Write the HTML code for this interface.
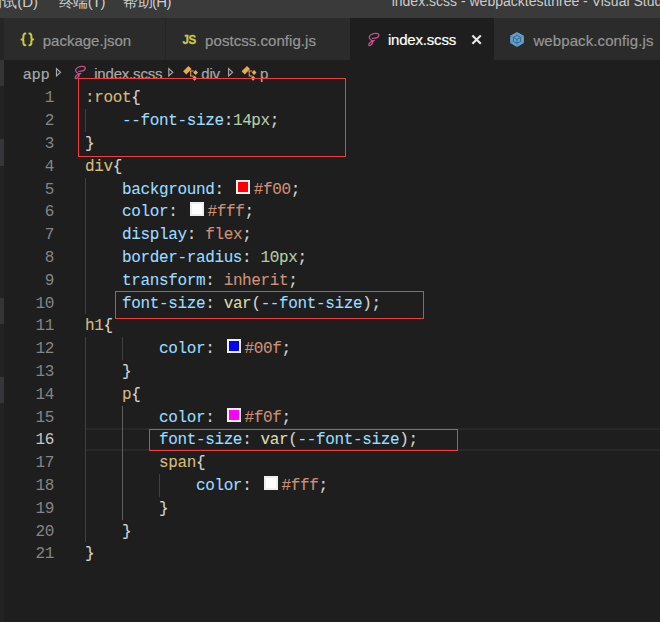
<!DOCTYPE html>
<html><head><meta charset="utf-8">
<style>
*{margin:0;padding:0;box-sizing:border-box}
html,body{width:660px;height:622px;overflow:hidden;background:#1e1e1e}
body{position:relative;font-family:"Liberation Sans",sans-serif}
.abs{position:absolute}
#title{left:0;top:0;width:660px;height:18px;background:#3a3a3a;overflow:hidden}
#title span{position:absolute;color:#cccccc;font-size:14px;white-space:nowrap}
#tabs{left:0;top:18px;width:660px;height:42px;background:#252526}
.tab{position:absolute;top:0;height:42px;background:#2b2b2b}
.lbl{-webkit-text-stroke:0.2px currentColor;position:absolute;top:11px;font-size:15px;color:#969696;white-space:nowrap;line-height:20px}
.tab.active{background:#1e1e1e;height:42px}
#crumb{left:0;top:60px;width:660px;height:26px}
#crumb span{-webkit-text-stroke:0.2px currentColor;position:absolute;top:3px;font-size:15px;color:#a9a9a9;white-space:nowrap;line-height:20px}
#strip{left:0;top:60px;width:4px;height:562px;background:#232323}
.seg{position:absolute;left:0;width:4px}
.ln{position:absolute;right:606px;font-family:"Liberation Mono",monospace;font-size:16px;letter-spacing:-0.36px;color:#858585;line-height:22.8px;height:22.8px;white-space:pre;text-align:right}
.code{-webkit-text-stroke:0.1px currentColor;position:absolute;left:85px;font-family:"Liberation Mono",monospace;font-size:16px;letter-spacing:-0.36px;color:#d4d4d4;line-height:22.8px;height:22.8px;white-space:pre}
.g{position:absolute;width:1px;background:#404040}
.box{position:absolute;border:1px solid #f03e3e}
.ln.cur{color:#c6c6c6}
.sel{color:#d7ba7d}.prop{color:#9cdcfe}.str{color:#ce9178}.num{color:#b5cea8}.fn{color:#dcdcaa}
.sw{display:inline-block;width:14px;height:14px;border:2px solid #eeeeee;margin:0 3.3px 0 3.6px;vertical-align:0px}
</style></head><body>
<div id="title" class="abs">
  <span style="right:622px;top:-7px;font-size:15px">调试(D)</span>
  <span style="right:555px;top:-7px;font-size:15px;letter-spacing:-0.6px">终端(T)</span>
  <span style="right:489px;top:-7px;font-size:15px;letter-spacing:-0.6px">帮助(H)</span>
  <span style="left:391.7px;top:-7px;font-size:14px">index.scss - webpacktestthree - Visual Studio Code</span>
</div>
<div id="tabs" class="abs">
  <div class="tab" style="left:4px;width:161px"></div>
  <div class="tab" style="left:166px;width:184px"></div>
  <div class="tab active" style="left:350px;width:144px"></div>
  <div class="tab" style="left:494px;width:166px"></div>
  <span class="lbl" style="left:42.7px;top:12.8px;letter-spacing:0.01px">package.json</span>
  <span class="lbl" style="left:205.1px;top:12.8px;letter-spacing:0.05px">postcss.config.js</span>
  <span class="lbl" style="left:387.9px;top:12.4px;letter-spacing:-0.19px;color:#ffffff">index.scss</span>
  <span class="lbl" style="left:533.4px;top:12.8px;letter-spacing:0.1px">webpack.config.js</span>
  <svg class="abs" style="left:0;top:0" width="660" height="42" viewBox="0 18 660 42">
    <g fill="none" stroke="#c8ca3e" stroke-width="2" stroke-linecap="round" stroke-linejoin="round">
      <path d="M25.4 33.6 C23.6 33.8 23.4 35 23.4 36.6 L23.4 37.8 C23.4 38.9 22.8 39.4 21.6 39.4 C22.8 39.4 23.4 39.9 23.4 41 L23.4 42.4 C23.4 44 23.6 45.2 25.4 45.3"/>
      <path d="M29.4 33.6 C31.2 33.8 31.4 35 31.4 36.6 L31.4 37.8 C31.4 38.9 32 39.4 33.2 39.4 C32 39.4 31.4 39.9 31.4 41 L31.4 42.4 C31.4 44 31.2 45.2 29.4 45.3"/>
    </g>
    <text x="182.6" y="44" font-family="Liberation Sans" font-weight="bold" font-size="12.6" fill="#cbcb41" stroke="#cbcb41" stroke-width="0.3" letter-spacing="-0.6" transform="translate(182.6 0) scale(0.92 1) translate(-182.6 0)">JS</text>
    <g fill="none" stroke="#c2528a" stroke-width="1.3" stroke-linecap="round" stroke-linejoin="round">
      <path d="M372.4 38.3 C375 38.3 378.6 37.6 378.9 35.3 C379.1 33.6 376.8 33.2 375 33.4 C372 33.8 369.2 35.6 369.2 37.6 C369.2 39.3 371.6 40.2 372.6 41.2 C373.2 42 372.4 43.6 371.2 44.8 C370.2 45.8 368.8 45.9 368.8 44.8 C368.8 43 372 41.2 374.4 40.4"/>
    </g>
    <polygon points="517,31.9 523.9,35.8 523.9,43 517,46.9 510.2,43 510.2,35.8" fill="#5fa3d3"/>
    <g fill="none" stroke="#34566e" stroke-width="0.8" stroke-linejoin="round">
      <polygon points="517,35.4 520.6,37.4 520.6,41.4 517,43.4 513.4,41.4 513.4,37.4"/>
      <path d="M513.4 37.4 L517 39.4 L520.6 37.4 M517 39.4 L517 43.4"/>
      <path d="M517 31.9 L517 35.4 M523.9 35.8 L520.6 37.4 M523.9 43 L520.6 41.4 M517 46.9 L517 43.4 M510.2 43 L513.4 41.4 M510.2 35.8 L513.4 37.4" stroke-width="0.6" stroke="#4a7a9a"/>
    </g>
    <g stroke="#e8e8e8" stroke-width="2.1" stroke-linecap="butt">
      <path d="M472.4 35.4 L480.8 43.8 M480.8 35.4 L472.4 43.8"/>
    </g>
  </svg>
</div>
<div id="crumb" class="abs">
  <span style="left:23px;top:4px;letter-spacing:0.66px">app</span>
  <span style="left:94.2px;top:4px;letter-spacing:-0.19px">index.scss</span>
  <span style="left:201.2px;top:4px;letter-spacing:-0.14px">div</span>
  <span style="left:260px;top:4px">p</span>
  <svg class="abs" style="left:0;top:0" width="660" height="26" viewBox="0 60 660 26">
    <g fill="none" stroke="#a5a5a5" stroke-width="1.2" stroke-linejoin="miter">
      <path d="M56.5 68.6 L60.5 72.3 L56.5 76 Z"/>
      <path d="M168.8 68.6 L172.8 72.3 L168.8 76 Z"/>
      <path d="M228.6 68.6 L232.6 72.3 L228.6 76 Z"/>
    </g>
    <g fill="none" stroke="#c2528a" stroke-width="1.3" stroke-linecap="round" stroke-linejoin="round">
      <path d="M78.8 71.3 C81.4 71.3 85 70.6 85.3 68.3 C85.5 66.6 83.2 66.2 81.4 66.4 C78.4 66.8 75.6 68.6 75.6 70.6 C75.6 72.3 78 73.2 79 74.2 C79.6 75 78.8 76.6 77.6 77.8 C76.6 78.8 75.2 78.9 75.2 77.8 C75.2 76 78.4 74.2 80.8 73.4"/>
    </g>
    <g fill="#e8ab53">
      <polygon points="188.5,66 191.5,69.1 186.3,74.4 183.1,71.3"/>
      <polygon points="195.6,70.1 198,72.5 195.6,74.9 193.2,72.5"/>
      <polygon points="194.6,75.8 197,78.3 194.6,80.8 192.2,78.3"/>
      <path d="M189.8 70.6 L193.6 70.6 L193.6 71.6 L191.2 71.6 L191.2 75.5 L193.8 75.5 L193.8 76.5 L190.2 76.5 L190.2 71.6 L189.8 71.6 Z"/>
    </g>
    <g fill="#e8ab53" transform="translate(58.5 0)">
      <polygon points="188.5,66 191.5,69.1 186.3,74.4 183.1,71.3"/>
      <polygon points="195.6,70.1 198,72.5 195.6,74.9 193.2,72.5"/>
      <polygon points="194.6,75.8 197,78.3 194.6,80.8 192.2,78.3"/>
      <path d="M189.8 70.6 L193.6 70.6 L193.6 71.6 L191.2 71.6 L191.2 75.5 L193.8 75.5 L193.8 76.5 L190.2 76.5 L190.2 71.6 L189.8 71.6 Z"/>
    </g>
  </svg>
</div>
<div id="strip" class="abs">
  <div class="seg" style="top:0;height:25.5px;background:#353535"></div>
  <div class="seg" style="top:79px;height:27px;background:#35353a"></div>
  <div class="seg" style="top:238px;height:26px;background:#353535"></div>
  <div class="seg" style="top:317px;height:26px;background:#35353a"></div>
</div>
<div id="editor">
<div class="abs" style="left:85px;top:428.00px;width:575px;height:23.20px;border-top:2px solid #282828;border-bottom:2px solid #282828"></div>
<div class="g" style="background:#404040;left:85.00px;top:109.20px;height:22.80px"></div>
<div class="g" style="background:#404040;left:85.00px;top:177.60px;height:136.80px"></div>
<div class="g" style="background:#404040;left:85.00px;top:337.20px;height:45.60px"></div>
<div class="g" style="background:#404040;left:85.00px;top:382.80px;height:159.60px"></div>
<div class="g" style="background:#404040;left:121.96px;top:337.20px;height:22.80px"></div>
<div class="g" style="background:#5e5e5e;left:121.96px;top:405.60px;height:114.00px"></div>
<div class="g" style="background:#404040;left:158.92px;top:474.00px;height:22.80px"></div>
<div class="ln" style="top:87.40px">1</div>
<div class="code" style="top:87.40px"><span class="sel">:root</span>{</div>
<div class="ln" style="top:110.20px">2</div>
<div class="code" style="top:110.20px">    <span class="prop">--font-size</span>:<span class="num">14px</span>;</div>
<div class="ln" style="top:133.00px">3</div>
<div class="code" style="top:133.00px">}</div>
<div class="ln" style="top:155.80px">4</div>
<div class="code" style="top:155.80px"><span class="sel">div</span>{</div>
<div class="ln" style="top:178.60px">5</div>
<div class="code" style="top:178.60px">    <span class="prop">background</span>: <i class="sw" style="background:#f00"></i><span class="str">#f00</span>;</div>
<div class="ln" style="top:201.40px">6</div>
<div class="code" style="top:201.40px">    <span class="prop">color</span>: <i class="sw" style="background:#fff"></i><span class="str">#fff</span>;</div>
<div class="ln" style="top:224.20px">7</div>
<div class="code" style="top:224.20px">    <span class="prop">display</span>: <span class="str">flex</span>;</div>
<div class="ln" style="top:247.00px">8</div>
<div class="code" style="top:247.00px">    <span class="prop">border-radius</span>: <span class="num">10px</span>;</div>
<div class="ln" style="top:269.80px">9</div>
<div class="code" style="top:269.80px">    <span class="prop">transform</span>: <span class="str">inherit</span>;</div>
<div class="ln" style="top:292.60px">10</div>
<div class="code" style="top:292.60px">    <span class="prop">font-size</span>: <span class="fn">var</span>(<span class="prop">--font-size</span>);</div>
<div class="ln" style="top:315.40px">11</div>
<div class="code" style="top:315.40px"><span class="sel">h1</span>{</div>
<div class="ln" style="top:338.20px">12</div>
<div class="code" style="top:338.20px">        <span class="prop">color</span>: <i class="sw" style="background:#00f"></i><span class="str">#00f</span>;</div>
<div class="ln" style="top:361.00px">13</div>
<div class="code" style="top:361.00px">    }</div>
<div class="ln" style="top:383.80px">14</div>
<div class="code" style="top:383.80px">    <span class="sel">p</span>{</div>
<div class="ln" style="top:406.60px">15</div>
<div class="code" style="top:406.60px">        <span class="prop">color</span>: <i class="sw" style="background:#f0f"></i><span class="str">#f0f</span>;</div>
<div class="ln cur" style="top:429.40px">16</div>
<div class="code" style="top:429.40px">        <span class="prop">font-size</span>: <span class="fn">var</span>(<span class="prop">--font-size</span>);</div>
<div class="ln" style="top:452.20px">17</div>
<div class="code" style="top:452.20px">        <span class="sel">span</span>{</div>
<div class="ln" style="top:475.00px">18</div>
<div class="code" style="top:475.00px">            <span class="prop">color</span>: <i class="sw" style="background:#fff"></i><span class="str">#fff</span>;</div>
<div class="ln" style="top:497.80px">19</div>
<div class="code" style="top:497.80px">        }</div>
<div class="ln" style="top:520.60px">20</div>
<div class="code" style="top:520.60px">    }</div>
<div class="ln" style="top:543.40px">21</div>
<div class="code" style="top:543.40px">}</div>
<div class="box" style="left:78px;top:78px;width:268px;height:79px"></div>
<div class="box" style="left:115px;top:291px;width:309px;height:28px"></div>
<div class="box" style="left:149px;top:429px;width:309px;height:22px"></div>
</div>
</body></html>
